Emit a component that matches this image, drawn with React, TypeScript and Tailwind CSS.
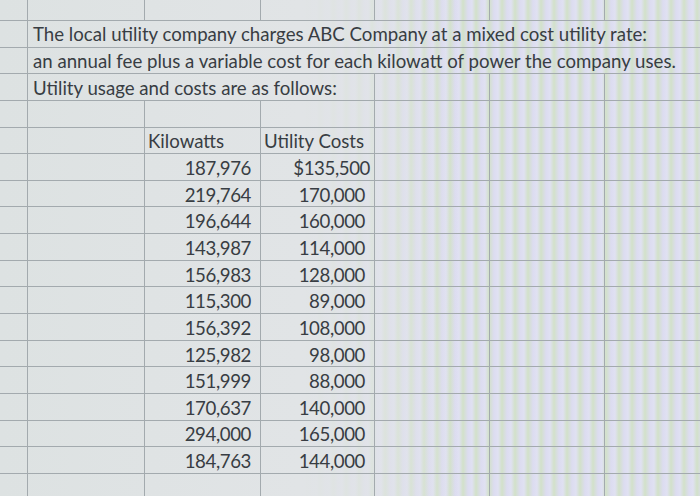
import React from "react";

const W = [28, 117, 116, 114, 115, 115, 95];
const RH = 26.65;

const data: [string, string][] = [
  ["187,976", "$135,500"],
  ["219,764", "170,000"],
  ["196,644", "160,000"],
  ["143,987", "114,000"],
  ["156,983", "128,000"],
  ["115,300", "89,000"],
  ["156,392", "108,000"],
  ["125,982", "98,000"],
  ["151,999", "88,000"],
  ["170,637", "140,000"],
  ["294,000", "165,000"],
  ["184,763", "144,000"],
];

function Cell({
  w,
  children,
  className = "",
  noRight = false,
}: {
  w: number;
  children?: React.ReactNode;
  className?: string;
  noRight?: boolean;
}) {
  return (
    <div
      style={{ width: w }}
      className={`shrink-0 h-full border-b border-[#a3aaae] ${noRight ? "" : "border-r"} flex items-center whitespace-nowrap ${className}`}
    >
      {children}
    </div>
  );
}

function EmptyRow({ h }: { h: number }) {
  return (
    <div style={{ height: h }} className="flex">
      {W.map((w, i) => (
        <Cell key={i} w={w} noRight={i === W.length - 1} />
      ))}
    </div>
  );
}

export default function App() {
  return (
    <div
      className="w-[700px] h-[496px] overflow-hidden text-[#383d43] text-[18.65px] bg-[linear-gradient(90deg,#dde2e2_0px,#e1e4e6_300px,rgba(225,228,230,0.7)_380px,transparent_460px),repeating-linear-gradient(90deg,#dcdcf0_0px,#e0e1f2_4px,#d2e1c9_8px,#dcdcf0_13px)]"
      style={{ fontFamily: "Lato, 'Open Sans', sans-serif" }}
    >
      <EmptyRow h={21} />
      {/* Row 1 */}
      <div style={{ height: RH }} className="flex">
        <Cell w={W[0]} />
        <Cell w={672} noRight className="pl-[5px] pt-[3px]">
          The local utility company charges ABC Company at a mixed cost utility rate:
        </Cell>
      </div>
      {/* Row 2 */}
      <div style={{ height: RH }} className="flex">
        <Cell w={W[0]} />
        <Cell w={672} noRight className="pl-[5px] pt-[3px]">
          an annual fee plus a variable cost for each kilowatt of power the company uses.
        </Cell>
      </div>
      {/* Row 3 */}
      <div style={{ height: RH }} className="flex">
        <Cell w={W[0]} />
        <Cell w={W[1] + W[2] + W[3]} className="pl-[5px] pt-[3px]">
          Utility usage and costs are as follows:
        </Cell>
        <Cell w={W[4]} />
        <Cell w={W[5]} />
        <Cell w={W[6]} noRight />
      </div>
      <EmptyRow h={RH} />
      {/* Header */}
      <div style={{ height: RH }} className="flex">
        <Cell w={W[0]} />
        <Cell w={W[1]} />
        <Cell w={W[2]} className="pl-[3px] pt-[3px]">Kilowatts</Cell>
        <Cell w={W[3]} className="pl-[3px] pt-[3px]">Utility Costs</Cell>
        <Cell w={W[4]} />
        <Cell w={W[5]} />
        <Cell w={W[6]} noRight />
      </div>
      {data.map(([k, c], i) => (
        <div key={i} style={{ height: RH }} className="flex">
          <Cell w={W[0]} />
          <Cell w={W[1]} />
          <Cell w={W[2]} className="justify-end pr-[9px] pt-[4px] tracking-[-0.4px]">
            {k}
          </Cell>
          <Cell
            w={W[3]}
            className={`justify-end pt-[4px] tracking-[-0.4px] ${c.startsWith("$") ? "pr-[4px]" : "pr-[9px]"}`}
          >
            {c}
          </Cell>
          <Cell w={W[4]} />
          <Cell w={W[5]} />
          <Cell w={W[6]} noRight />
        </div>
      ))}
      <EmptyRow h={RH} />
    </div>
  );
}
